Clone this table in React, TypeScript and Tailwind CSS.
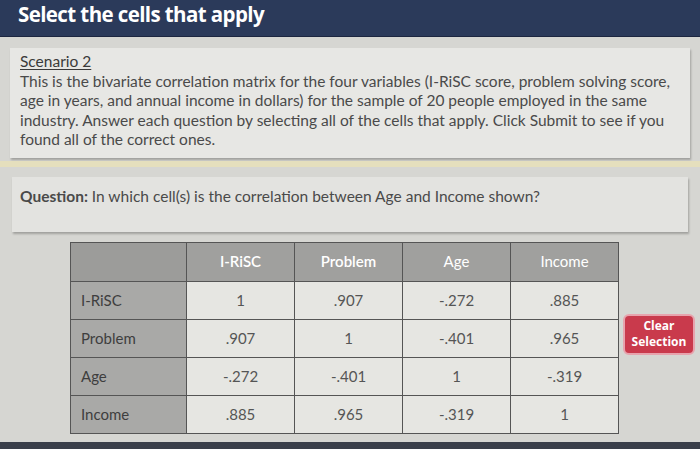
const cols = ["I-RiSC", "Problem", "Age", "Income"];
const rows: [string, string[]][] = [
  ["I-RiSC", ["1", ".907", "-.272", ".885"]],
  ["Problem", [".907", "1", "-.401", ".965"]],
  ["Age", ["-.272", "-.401", "1", "-.319"]],
  ["Income", [".885", ".965", "-.319", "1"]],
];

export default function App() {
  return (
    <div className="w-[700px] h-[449px] overflow-hidden bg-[#d6d6d2] font-['Lato','Open_Sans',sans-serif] text-[#444]">
      <div className="h-[37px] bg-[#2b3a5a] pl-[18px] border-b border-[#1c2640]">
        <h1 className="text-[20.5px] leading-[26px] pt-[1px] font-bold text-white tracking-[-0.6px] font-['Open_Sans',sans-serif]">Select the cells that apply</h1>
      </div>

      <div className="mx-[10px] mt-[11px] bg-[#e7e7e4] pl-[10px] pr-3 pt-[4px] pb-[8px] shadow-[1px_2px_2px_rgba(0,0,0,0.25)]">
        <div className="text-[15.5px] leading-[19.5px] underline underline-offset-2 text-[#3a3a3a]">Scenario 2</div>
        <p className="text-[15.5px] leading-[19.5px] text-[#4a4a4a]">
          This is the bivariate correlation matrix for the four variables (I-RiSC score, problem solving score, age in years, and annual income in dollars) for the sample of 20 people employed in the same industry. Answer each question by selecting all of the cells that apply. Click Submit to see if you found all of the correct ones.
        </p>
      </div>

      <div className="mt-[3px] h-[6px] bg-[#e5dfbd]" />

      <div className="mx-[12px] mt-[10px] h-[55px] bg-[#e3e3e0] pl-[8px] pt-[8px] text-[15.5px] shadow-[1px_2px_2px_rgba(0,0,0,0.25)]">
        <span className="font-bold text-[#4a4a4a]">Question:</span> <span className="text-[#4a4a4a]">In which cell(s) is the correlation between Age and Income shown?</span>
      </div>

      <div className="flex items-start mt-[10px] ml-[70px]">
        <table className="border-collapse text-[15px]">
          <thead>
            <tr className="h-[39px]">
              <th className="w-[116px] bg-[#9c9c9a] border border-[#555]" />
              {cols.map((c, i) => (
                <th key={c} className={`w-[108px] bg-[#a0a09e] border border-[#555] text-white text-center ${i < 2 ? "font-semibold" : "font-normal"}`}>{c}</th>
              ))}
            </tr>
          </thead>
          <tbody>
            {rows.map(([name, vals]) => (
              <tr key={name} className="h-[38px]">
                <td className="bg-[#a9a9a7] border border-[#555] pl-[10px] text-[#3e3e3e]">{name}</td>
                {vals.map((v, i) => (
                  <td key={i} className="bg-[#e6e6e2] border border-[#555] text-center text-[#555]">{v}</td>
                ))}
              </tr>
            ))}
          </tbody>
        </table>
        <div className="ml-[4px] mt-[72px] w-[72px] h-[41px] rounded-[6px] bg-[#c93a4c] border-2 border-[#e7a3ad] flex items-center justify-center text-center text-white font-bold text-[12px] leading-[16px] font-['Open_Sans',sans-serif]">
          Clear<br />Selection
        </div>
      </div>

      <div className="mt-[8px] h-[10px] bg-[#3a3f4a]" />
    </div>
  );
}
